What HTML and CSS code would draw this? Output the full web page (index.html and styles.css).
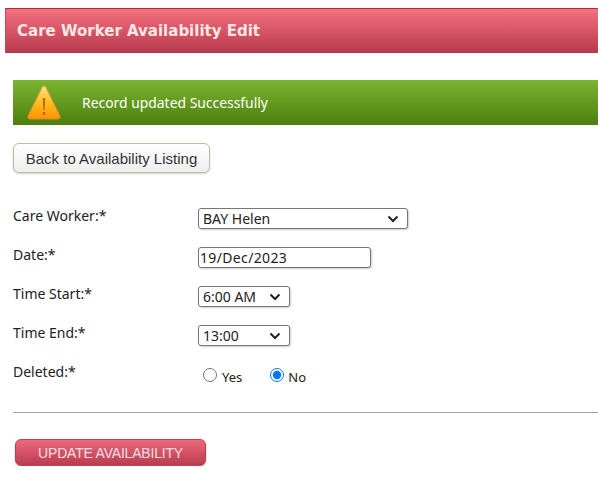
FILE: index.html
```html
<!DOCTYPE html>
<html lang="en">
<head>
    <meta charset="UTF-8">
    <meta name="viewport" content="width=device-width, initial-scale=1.0">
    <title>Care Worker Availability Edit</title>
    <link rel="stylesheet" href="styles.css">
</head>
<body>

<header class="title-bar">
    <h1>Care Worker Availability Edit</h1>
</header>

<div class="container">
    <!-- status message -->
    <div class="message">
        <svg class="warn-icon" width="34" height="35" viewBox="0 0 34 35" aria-hidden="true">
            <defs>
                <linearGradient id="warn-fill" x1="0" y1="0" x2="0" y2="1">
                    <stop offset="0" stop-color="#ffe680"/>
                    <stop offset="0.55" stop-color="#ffb81f"/>
                    <stop offset="1" stop-color="#ff9300"/>
                </linearGradient>
            </defs>
            <path d="M17 1 C18 1 18.6 1.5 19.2 2.5 L32.8 30.5 C33.8 32.6 32.8 34 31 34 L3 34 C1.2 34 0.2 32.6 1.2 30.5 L14.8 2.5 C15.4 1.5 16 1 17 1 Z" fill="url(#warn-fill)" stroke="#d98a2b" stroke-width="1"/>
            <path d="M15.7 13 L18.3 13 L17.7 25 L16.3 25 Z" fill="#c9690c"/>
            <rect x="15.8" y="27" width="2.4" height="3" fill="#c9690c"/>
        </svg>
        <span>Record updated Successfully</span>
    </div>

    <button class="btn-back" type="button">Back to Availability Listing</button>

    <form class="edit-form">
        <div class="form-row">
            <label for="worker">Care Worker:*</label>
            <select id="worker" class="field field-select field-wide">
                <option>BAY Helen</option>
            </select>
        </div>
        <div class="form-row">
            <label for="date">Date:*</label>
            <input id="date" class="field field-date" type="text" value="19/Dec/2023">
        </div>
        <div class="form-row">
            <label for="start">Time Start:*</label>
            <select id="start" class="field field-select field-time">
                <option>6:00 AM</option>
            </select>
        </div>
        <div class="form-row">
            <label for="end">Time End:*</label>
            <select id="end" class="field field-select field-time">
                <option>13:00</option>
            </select>
        </div>
        <div class="form-row">
            <label>Deleted:*</label>
            <div class="radios">
                <input id="del-yes" type="radio" name="deleted">
                <label for="del-yes" class="radio-text radio-yes">Yes</label>
                <input id="del-no" type="radio" name="deleted" checked>
                <label for="del-no" class="radio-text">No</label>
            </div>
        </div>

        <hr class="divider">

        <button class="btn-update" type="button">UPDATE AVAILABILITY</button>
    </form>
</div>

</body>
</html>
```

FILE: styles.css
```css
body {
    font-family: "Noto Sans", "DejaVu Sans", sans-serif;
    font-size: 14px;
    margin: 0;
    padding: 0;
    background-color: #ffffff;
    color: #222222;
    overflow-x: hidden;
}
.title-bar {
    margin: 8px 0 0 5px;
    height: 45px;
    box-sizing: border-box;
    padding-left: 11px;
    display: flex;
    align-items: center;
    background: linear-gradient(#f4707f, #b83b4e);
    border-top: 1px solid #a8303f;
    border-bottom: 1px solid #b03a4c;
    border-left: 1px solid #c04a5a;
}
.title-bar h1 {
    margin: 0;
    font-family: "DejaVu Sans", sans-serif;
    font-size: 15px;
    font-weight: bold;
    color: #fbe6e6;
}
.container {
    padding: 27px 0 0 13px;
}
.message {
    height: 45px;
    display: flex;
    align-items: center;
    background: linear-gradient(#7ab530, #4c7f0e);
    color: #ffffff;
    font-size: 13.9px;
}
.warn-icon {
    margin-left: 14px;
    margin-right: 21px;
    margin-top: -1px;
}
.btn-back {
    display: block;
    margin-top: 18px;
    width: 197px;
    height: 30px;
    padding: 0;
    font-family: "Liberation Sans", Arial, sans-serif;
    font-size: 15px;
    color: #333333;
    background: linear-gradient(#ffffff, #eeeeee);
    border: 1px solid #bdbda0;
    border-radius: 6px;
    box-shadow: 0 1px 2px rgba(0, 0, 0, 0.2);
}
.edit-form {
    margin-top: 35px;
}
.form-row {
    display: flex;
    align-items: flex-start;
    height: 39px;
}
.form-row > label {
    width: 185px;
    line-height: 16px;
}
.field {
    box-sizing: border-box;
    height: 21px;
    margin: 0;
    padding: 0 4px;
    font-family: "Noto Sans", "DejaVu Sans", sans-serif;
    font-size: 14px;
    color: #222222;
    background-color: #ffffff;
    border: 1px solid #767676;
    border-radius: 3px;
    box-shadow: 1px 1px 2px rgba(0, 0, 0, 0.2);
}
.field-select {
    appearance: none;
    background-image: url("data:image/svg+xml,%3Csvg xmlns='http://www.w3.org/2000/svg' width='12' height='8' viewBox='0 0 12 8'%3E%3Cpath d='M1.5 1.5 L6 6 L10.5 1.5' fill='none' stroke='%23222222' stroke-width='2'/%3E%3C/svg%3E");
    background-repeat: no-repeat;
    background-position: right 8px center;
}
.field-wide {
    width: 210px;
}
.field-date {
    width: 173px;
    padding: 0 1px;
    letter-spacing: 0.35px;
}
.field-time {
    width: 92px;
}
.radios {
    display: flex;
    align-items: center;
    height: 18px;
    margin-top: 2px;
    margin-left: 5px;
}
.radios input {
    margin: 0 4px 0 0;
    width: 14px;
    height: 14px;
}
.radio-text {
    font-size: 13px;
    line-height: 18px;
    margin-top: 4px;
}
.radio-yes {
    margin-right: 28px;
    margin-left: 1px;
}
.divider {
    margin: 9px 0 0;
    border: none;
    border-top: 1px solid #a0a0a0;
}
.btn-update {
    display: block;
    margin: 26px 0 0 2px;
    width: 191px;
    height: 27px;
    padding: 0;
    font-family: "Liberation Sans", Arial, sans-serif;
    font-size: 14px;
    letter-spacing: -0.2px;
    color: #f6dfe2;
    background: linear-gradient(#ee6a7b, #b93c50);
    border: 1px solid #c23a4e;
    border-radius: 6px;
    box-shadow: 0 1px 2px rgba(0, 0, 0, 0.25);
}
```
